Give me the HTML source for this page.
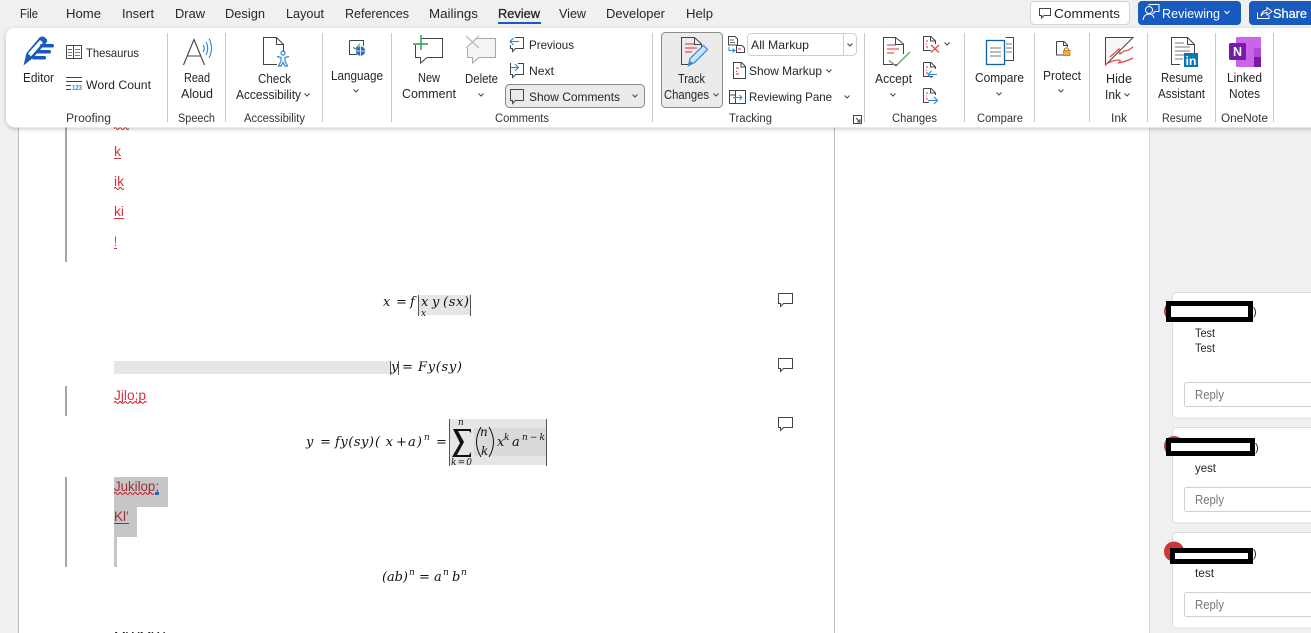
<!DOCTYPE html>
<html lang="en"><head><meta charset="utf-8"><title>Word Review</title>
<style>
html,body{margin:0;padding:0;width:1311px;height:633px;overflow:hidden;background:#f0f0f0}
svg{display:block;position:absolute;left:0;top:0}
text{font-family:"Liberation Sans",sans-serif;font-size:12.5px;fill:#262626;white-space:pre}
.g{font-size:11.5px;fill:#333}
.m{font-family:"DejaVu Serif","Liberation Serif",serif;font-style:italic;font-size:13px;fill:#111}
.n{font-family:"DejaVu Serif","Liberation Serif",serif;font-style:italic;font-size:9px;fill:#111}
.u{font-family:"DejaVu Serif","Liberation Serif",serif;font-size:13px;fill:#111}
.r{fill:#d4353d;font-size:14px}
.d{fill:#9b2f33;font-size:14px}
.w{fill:#fff;font-size:13px}
.ch{fill:none;stroke:#444;stroke-width:1}
.l{fill:none;stroke:#444;stroke-width:1}
.sep{stroke:#c9c9c9;stroke-width:1}
</style></head><body>
<svg width="1311" height="633" viewBox="0 0 1311 633" xmlns="http://www.w3.org/2000/svg">
<defs>
<filter id="sh" x="-2%" y="-10%" width="104%" height="125%"><feDropShadow dx="0" dy="1.5" stdDeviation="2" flood-color="#000" flood-opacity=".22"/></filter>
<path id="c" d="M-2.5-1.5L0 1L2.500-1.500" class="ch"/>
</defs>

<!-- canvas -->
<rect width="1311" height="633" fill="#f0f0f0"/>
<rect x="18" y="100" width="1132" height="533" fill="#fff"/>
<path d="M18.500 100V633M834.500 100V633" stroke="#bdbdbd" fill="none"/>
<path d="M1149.500 100V633" stroke="#d8d8d8" fill="none"/>

<!-- document change bars -->
<g fill="#a6a6a6"><rect x="65" y="127" width="2" height="135"/><rect x="65" y="386" width="2" height="30"/><rect x="65" y="477" width="2" height="90"/></g>

<!-- document text -->
<path d="M114 128.500q1.200-2 2.500 0t2.500 0 2.500 0 2.500 0 2.500 0 2.500 0" stroke="#d4202a" fill="none"/>
<text x="114" y="156" class="r" textLength="7" lengthAdjust="spacingAndGlyphs">k</text>
<rect x="114" y="158" width="7" height="1" fill="#d4353d"/>
<text x="114" y="186" class="r" textLength="10" lengthAdjust="spacingAndGlyphs">ik</text>
<path d="M114 188.500q1.200-2 2.500 0t2.500 0 2.500 0 2.500 0" stroke="#d4202a" fill="none"/>
<text x="114" y="216" class="r" textLength="10" lengthAdjust="spacingAndGlyphs">ki</text>
<rect x="114" y="218" width="10" height="1" fill="#d4353d"/>
<text x="114" y="246" class="r" textLength="3" lengthAdjust="spacingAndGlyphs">!</text>
<rect x="114" y="248" width="3" height="1" fill="#d4353d"/>

<text x="114" y="400" class="r" textLength="32" lengthAdjust="spacingAndGlyphs">Jjlo;p</text>
<path d="M114 402.500q1.200-2 2.500 0t2.500 0 2.500 0 2.500 0 2.500 0 2.500 0 2.500 0 2.500 0 2.500 0 2.500 0 2.500 0 2.500 0 2.500 0" stroke="#d4202a" fill="none"/>

<path d="M114 477H168V507H137V537H117V567H114Z" fill="#c6c6c6"/>
<text x="114" y="491" class="d" textLength="45" lengthAdjust="spacingAndGlyphs">Jukilop;</text>
<path d="M114 493.500q1.200-2 2.500 0t2.500 0 2.500 0 2.500 0 2.500 0 2.500 0 2.500 0 2.500 0 2.500 0 2.500 0 2.500 0 2.500 0 2.500 0 2.500 0 2.500 0 2.500 0" stroke="#c8202a" fill="none"/>
<rect x="155" y="492" width="4" height="3" fill="#2b5fb8"/>
<text x="114" y="521" class="d" textLength="15" lengthAdjust="spacingAndGlyphs">Kl’</text>
<rect x="114" y="523" width="15" height="1" fill="#9b2f33"/>
<text x="114" y="641" style="font-size:13px;fill:#222" textLength="51" lengthAdjust="spacingAndGlyphs">MWMW</text>

<!-- equation 1 -->
<rect x="419" y="295" width="51" height="20" fill="#e6e6e6"/>
<path d="M418.500 295V316M470.500 295V316" stroke="#555" fill="none"/>
<text x="383" y="306" class="m">x</text>
<text x="396" y="306" class="u">=</text>
<text x="410" y="306" class="m">f</text>
<text x="421" y="306" class="m">x</text>
<text x="421" y="316" class="n">x</text>
<text x="432" y="306" class="m">y</text>
<text x="443" y="306" class="m" textLength="26">(sx)</text>

<!-- equation 2 -->
<rect x="114" y="361" width="277" height="13" fill="#e6e6e6"/>
<path d="M390.500 361V375M398.500 361V375" stroke="#555" fill="none"/>
<text x="391" y="371" class="m">y</text>
<text x="402" y="371" class="u">=</text>
<text x="418" y="371" class="m" textLength="44">Fy(sy)</text>

<!-- equation 3 -->
<rect x="450" y="419" width="97" height="46" fill="#e6e6e6"/>
<rect x="474" y="428" width="72" height="28" fill="#dadada"/>
<path d="M449.500 419V466M546.500 419V466" stroke="#555" fill="none"/>
<text x="306" y="446" class="m">y</text>
<text x="320" y="446" class="u">=</text>
<text x="335" y="446" class="m" textLength="39">fy(sy)</text>
<text x="375" y="446" class="m" textLength="18">(x</text>
<text x="396" y="446" class="u">+</text>
<text x="408" y="446" class="m" textLength="14">a)</text>
<text x="424" y="440" class="n">n</text>
<text x="436" y="446" class="u">=</text>
<text x="458" y="425" class="n">n</text>
<path d="M453 429H471V433L469 431H458L464 442L457 455H469L471 452V457H452L460 443Z" fill="#111"/>
<text x="451" y="465" class="n" textLength="21">k=0</text>
<path d="M481 427Q472 442 481 457M489 427Q498 442 489 457" stroke="#111" fill="none"/>
<text x="480" y="436" class="m" style="font-size:12px">n</text>
<text x="481" y="455" class="m" style="font-size:12px">k</text>
<text x="497" y="446" class="m">x</text>
<text x="504" y="440" class="n">k</text>
<text x="512" y="446" class="m">a</text>
<text x="522" y="440" class="n" textLength="23">n−k</text>

<!-- equation 4 -->
<text x="382" y="581" class="m" textLength="26">(ab)</text>
<text x="409" y="575" class="n">n</text>
<text x="419" y="581" class="u">=</text>
<text x="434" y="581" class="m">a</text>
<text x="443" y="575" class="n">n</text>
<text x="452" y="581" class="m">b</text>
<text x="461" y="575" class="n">n</text>

<!-- comment margin icons -->
<path d="M778.500 293.500H792.500V303.500H783.500L780.500 306.500V303.500H778.500Z" class="l"/>
<path d="M778.500 358.500H792.500V368.500H783.500L780.500 371.500V368.500H778.500Z" class="l"/>
<path d="M778.500 417.500H792.500V427.500H783.500L780.500 430.500V427.500H778.500Z" class="l"/>

<!-- comment cards -->
<g fill="#fff" stroke="#dcdcdc">
<rect x="1172.500" y="292.500" width="160" height="125.500" rx="4"/>
<rect x="1172.500" y="427.500" width="160" height="95.500" rx="4"/>
<rect x="1172.500" y="532.500" width="160" height="95.500" rx="4"/>
<rect x="1184.500" y="382.500" width="150" height="24" rx="2" stroke="#d0d0d0"/>
<rect x="1184.500" y="487.500" width="150" height="24" rx="2" stroke="#d0d0d0"/>
<rect x="1184.500" y="592.500" width="150" height="24" rx="2" stroke="#d0d0d0"/>
</g>
<circle cx="1174" cy="311" r="10" fill="#d13438"/>
<circle cx="1174" cy="446" r="10" fill="#d13438"/>
<circle cx="1174" cy="551.500" r="10" fill="#d13438"/>
<g fill="#fff" stroke="#000">
<rect x="1168.500" y="303.500" width="82" height="16" stroke-width="5"/>
<rect x="1168.500" y="440.500" width="84" height="13" stroke-width="5"/>
<rect x="1172.500" y="550.500" width="78" height="11" stroke-width="5"/>
</g>
<g>
<text x="1253" y="315" style="font-size:11px">)</text>
<text x="1255" y="451" style="font-size:11px">)</text>
<text x="1253" y="557" style="font-size:11px">)</text>
<text x="1195" y="337" style="font-size:12px" textLength="20" lengthAdjust="spacingAndGlyphs">Test</text>
<text x="1195" y="352" style="font-size:12px" textLength="20" lengthAdjust="spacingAndGlyphs">Test</text>
<text x="1195" y="472" style="font-size:12px" textLength="21" lengthAdjust="spacingAndGlyphs">yest</text>
<text x="1195" y="577" style="font-size:12px" textLength="19" lengthAdjust="spacingAndGlyphs">test</text>
<text x="1195" y="399" style="font-size:12.500px;fill:#777" textLength="29" lengthAdjust="spacingAndGlyphs">Reply</text>
<text x="1195" y="504" style="font-size:12.500px;fill:#777" textLength="29" lengthAdjust="spacingAndGlyphs">Reply</text>
<text x="1195" y="609" style="font-size:12.500px;fill:#777" textLength="29" lengthAdjust="spacingAndGlyphs">Reply</text>
</g>

<!-- ribbon -->
<rect x="0" y="0" width="1311" height="28" fill="#f0f0f0"/>
<rect x="6" y="28" width="1330" height="99.500" rx="9" fill="#fff" filter="url(#sh)"/>

<!-- tabs -->
<g>
<text x="20" y="18" textLength="18" lengthAdjust="spacingAndGlyphs" style="font-size:13px">File</text>
<text x="66" y="18" textLength="35" lengthAdjust="spacingAndGlyphs">Home</text>
<text x="122" y="18" textLength="32" lengthAdjust="spacingAndGlyphs">Insert</text>
<text x="175" y="18" textLength="30" lengthAdjust="spacingAndGlyphs">Draw</text>
<text x="225" y="18" textLength="40" lengthAdjust="spacingAndGlyphs">Design</text>
<text x="286" y="18" textLength="38" lengthAdjust="spacingAndGlyphs">Layout</text>
<text x="345" y="18" textLength="64" lengthAdjust="spacingAndGlyphs">References</text>
<text x="429" y="18" textLength="49" lengthAdjust="spacingAndGlyphs">Mailings</text>
<text x="498" y="18" textLength="42" lengthAdjust="spacingAndGlyphs" style="stroke:#262626;stroke-width:.3">Review</text>
<rect x="498" y="22" width="43" height="2" fill="#185abd"/>
<text x="559" y="18" textLength="27" lengthAdjust="spacingAndGlyphs">View</text>
<text x="606" y="18" textLength="59" lengthAdjust="spacingAndGlyphs">Developer</text>
<text x="686" y="18" textLength="27" lengthAdjust="spacingAndGlyphs">Help</text>
</g>

<!-- top right buttons -->
<rect x="1030.500" y="1.500" width="99" height="23" rx="4" fill="#fff" stroke="#d4d4d4"/>
<path d="M1039.500 8.500H1050.500V15.500H1044L1041.500 18V15.500H1039.500Z" class="l"/>
<text x="1054" y="18" textLength="66" lengthAdjust="spacingAndGlyphs">Comments</text>
<rect x="1138" y="1" width="103" height="24" rx="4" fill="#185abd"/>
<g fill="none" stroke="#fff"><circle cx="1149" cy="10" r="3.500"/><path d="M1143 20Q1144 14 1149 14Q1153 14 1154 18M1149 5.500V4.500H1159V11.500H1155L1152.500 14"/></g>
<text x="1162" y="18" class="w" textLength="58" lengthAdjust="spacingAndGlyphs">Reviewing</text>
<path d="M1224.500 11L1227 13.500L1229.500 11" fill="none" stroke="#fff"/>
<rect x="1249" y="1" width="70" height="24" rx="4" fill="#185abd"/>
<path d="M1257.500 12.500V18.500H1269V15M1261 16Q1262 10.500 1267 10V7.500L1272 11.500L1267 15V12.500Q1263 12.500 1261 16Z" fill="none" stroke="#fff"/>
<text x="1273" y="18" class="w" textLength="34" lengthAdjust="spacingAndGlyphs" style="stroke:#fff;stroke-width:.2">Share</text>

<!-- separators -->
<path class="sep" d="M167.500 33V122M225.500 33V122M322.500 33V122M391.500 33V122M652.500 33V122M864.500 33V122M964.500 33V122M1034.500 33V122M1089.500 33V122M1147.500 33V122M1215.500 33V122M1273.500 33V122"/>

<!-- group labels -->
<g>
<text x="66" y="122" class="g" textLength="45" lengthAdjust="spacingAndGlyphs">Proofing</text>
<text x="178" y="122" class="g" textLength="37" lengthAdjust="spacingAndGlyphs">Speech</text>
<text x="244" y="122" class="g" textLength="61" lengthAdjust="spacingAndGlyphs">Accessibility</text>
<text x="495" y="122" class="g" textLength="54" lengthAdjust="spacingAndGlyphs">Comments</text>
<text x="729" y="122" class="g" textLength="43" lengthAdjust="spacingAndGlyphs">Tracking</text>
<text x="892" y="122" class="g" textLength="45" lengthAdjust="spacingAndGlyphs">Changes</text>
<text x="977" y="122" class="g" textLength="46" lengthAdjust="spacingAndGlyphs">Compare</text>
<text x="1111" y="122" class="g" textLength="16" lengthAdjust="spacingAndGlyphs">Ink</text>
<text x="1162" y="122" class="g" textLength="40" lengthAdjust="spacingAndGlyphs">Resume</text>
<text x="1221" y="122" class="g" textLength="47" lengthAdjust="spacingAndGlyphs">OneNote</text>
</g>

<!-- buttons with state -->
<rect x="661.500" y="32.500" width="61" height="75" rx="4" fill="#ebebeb" stroke="#8a8a8a"/>
<rect x="505.500" y="84.500" width="139" height="23" rx="4" fill="#ebebeb" stroke="#8a8a8a"/>
<rect x="747.500" y="33.500" width="109" height="22" rx="4" fill="#fff" stroke="#cfcfcf"/>
<path d="M843.500 34V55" stroke="#cfcfcf"/>

<!-- ribbon text -->
<g>
<text x="23" y="82" textLength="31" lengthAdjust="spacingAndGlyphs">Editor</text>
<text x="86" y="57" textLength="53" lengthAdjust="spacingAndGlyphs" style="font-size:12px">Thesaurus</text>
<text x="86" y="89" textLength="65" lengthAdjust="spacingAndGlyphs" style="font-size:12px">Word Count</text>
<text x="184" y="82" textLength="26" lengthAdjust="spacingAndGlyphs">Read</text>
<text x="181" y="98" textLength="32" lengthAdjust="spacingAndGlyphs">Aloud</text>
<text x="258" y="83" textLength="33" lengthAdjust="spacingAndGlyphs">Check</text>
<text x="236" y="99" textLength="65" lengthAdjust="spacingAndGlyphs">Accessibility</text>
<text x="331" y="80" textLength="52" lengthAdjust="spacingAndGlyphs">Language</text>
<text x="418" y="82" textLength="22" lengthAdjust="spacingAndGlyphs">New</text>
<text x="402" y="98" textLength="54" lengthAdjust="spacingAndGlyphs">Comment</text>
<text x="465" y="83" textLength="33" lengthAdjust="spacingAndGlyphs">Delete</text>
<text x="529" y="49" textLength="45" lengthAdjust="spacingAndGlyphs" style="font-size:12px">Previous</text>
<text x="529" y="75" textLength="25" lengthAdjust="spacingAndGlyphs" style="font-size:12px">Next</text>
<text x="529" y="101" textLength="91" lengthAdjust="spacingAndGlyphs" style="font-size:12px">Show Comments</text>
<text x="678" y="83" textLength="27" lengthAdjust="spacingAndGlyphs">Track</text>
<text x="664" y="99" textLength="45" lengthAdjust="spacingAndGlyphs">Changes</text>
<text x="751" y="49" textLength="58" lengthAdjust="spacingAndGlyphs" style="font-size:12px">All Markup</text>
<text x="749" y="75" textLength="73" lengthAdjust="spacingAndGlyphs" style="font-size:12px">Show Markup</text>
<text x="749" y="101" textLength="83" lengthAdjust="spacingAndGlyphs" style="font-size:12px">Reviewing Pane</text>
<text x="875" y="83" textLength="37" lengthAdjust="spacingAndGlyphs">Accept</text>
<text x="975" y="82" textLength="49" lengthAdjust="spacingAndGlyphs">Compare</text>
<text x="1043" y="80" textLength="38" lengthAdjust="spacingAndGlyphs">Protect</text>
<text x="1106" y="83" textLength="26" lengthAdjust="spacingAndGlyphs">Hide</text>
<text x="1105" y="99" textLength="16" lengthAdjust="spacingAndGlyphs">Ink</text>
<text x="1161" y="82" textLength="42" lengthAdjust="spacingAndGlyphs">Resume</text>
<text x="1158" y="98" textLength="47" lengthAdjust="spacingAndGlyphs">Assistant</text>
<text x="1227" y="82" textLength="35" lengthAdjust="spacingAndGlyphs">Linked</text>
<text x="1229" y="98" textLength="31" lengthAdjust="spacingAndGlyphs">Notes</text>
</g>

<!-- chevrons -->
<g>
<use href="#c" x="307" y="95"/><use href="#c" x="356" y="91"/><use href="#c" x="481" y="95"/>
<use href="#c" x="635" y="96"/><use href="#c" x="716" y="95"/><use href="#c" x="850" y="45"/>
<use href="#c" x="829" y="71"/><use href="#c" x="847" y="97"/><use href="#c" x="893" y="95"/>
<use href="#c" x="947" y="44"/><use href="#c" x="999" y="94"/><use href="#c" x="1061" y="91"/>
<use href="#c" x="1127" y="95"/>
</g>

<!-- Editor -->
<g fill="#185abd">
<path d="M23.500 65.500L26.500 53L39.500 37.500Q42 35.500 45 37.500L47 39.500Q47.500 41 46.500 42.500L33 58Z M28 53.500L31 56.500L43 42.500L40 40Z" fill-rule="evenodd"/>
<rect x="40" y="44" width="14" height="3.500" rx="1.700"/>
<rect x="36" y="50" width="15" height="3.500" rx="1.700"/>
<rect x="32" y="56" width="14" height="3.500" rx="1.700"/>
</g>
<!-- Thesaurus -->
<path class="l" d="M66.500 45.500H73.500V58.500H66.500ZM73.500 45.500H81.500V58.500H73.500Z"/>
<path d="M68 49.500H72" stroke="#e02b2b"/><path d="M68 52.500H72M68 55.500H72M75 49.500H80M75 52.500H80M75 55.500H80" stroke="#777"/>
<!-- Word count -->
<path class="l" d="M66 77.500H82M66 81.500H82M66 85.500H71M66 89.500H71"/>
<text x="72" y="90" style="font-size:7.500px;fill:#2b88d8;font-weight:bold" textLength="10" lengthAdjust="spacingAndGlyphs">123</text>
<!-- Read aloud -->
<path d="M183.500 65L194 39.500L204.500 65M187 56H201" fill="none" stroke="#444" stroke-width="1.100"/>
<path d="M203 45Q205.500 48.500 203 52M206 42Q209.500 48 206 55M209 38.500Q214 48 209 58" fill="none" stroke="#2b88d8" stroke-width="1.100"/>
<!-- Check accessibility -->
<path class="l" d="M283.500 52V44.500L276.500 37.500H263.500V64.500H277M276.500 37.500V44.500H283.500"/>
<g fill="none" stroke="#2b88d8" stroke-width="1.200"><circle cx="283" cy="53" r="2"/><path d="M277 56.500L281 57.500V61L278.500 66H281L283 62.500L285 66H287.500L285 61V57.500L289 56.500"/></g>
<!-- Language -->
<path class="l" d="M349.500 40.500H363.500V46M349.500 40.500V54.500H357"/>
<path d="M353 47L355 49L360 44" stroke="#2e9e5b" fill="none"/>
<circle cx="360.500" cy="51" r="4.700" fill="#2b6cc4"/><path d="M356 51H365M360.500 46.500V55.500" stroke="#fff" stroke-width=".8"/>
<!-- New comment -->
<path class="l" d="M421.500 38.500H442.500V57.500H427L420.500 63V57.500H415.500V45"/>
<path d="M421 35V50M413 44H428" stroke="#1f9e4d" stroke-width="1.400"/>
<!-- Delete -->
<path d="M475 38.500H495.500V57.500H479L472.500 63V57.500H467.500V48" fill="#f4f4f4" stroke="#a8a8a8"/>
<path d="M466 36L479 48M479 36L466 48" stroke="#bdbdbd" stroke-width="1.300"/>
<!-- Previous -->
<path class="l" d="M515 37.500H523.500V48.500H515.500L512.500 51.500V48.500H510.500V45"/>
<path d="M519 41.500H510.500M513.500 38L510 41.500L513.500 45" fill="none" stroke="#2b88d8" stroke-width="1.100"/>
<!-- Next -->
<path class="l" d="M518 63.500H523.500V74.500H515.500L512.500 77.500V74.500H510.500V63.500H511"/>
<path d="M510 67.500H518.500M515 64L518.500 67.500L515 71" fill="none" stroke="#2b88d8" stroke-width="1.100"/>
<!-- Show comments bubble -->
<path class="l" d="M510.500 89.500H523.500V100.500H515.500L512.500 103.500V100.500H510.500Z"/>
<!-- Track changes -->
<path class="l" d="M701.500 48V44L694.500 37.500H681.500V64.500H688M694.500 37.500V44.500H701.500"/>
<path d="M685 44H694M685 48H697M685 52H692" stroke="#e8282d"/>
<path d="M688.500 65.500L690 58.500L703.500 45.500L707.500 49.500L694.500 62.500Z" fill="#cfe4f6" stroke="#2b88d8" stroke-width="1.200"/>
<path d="M689 65L690.500 61L692.500 63Z" fill="#2b88d8"/>
<!-- display for review -->
<path class="l" d="M728.500 36.500H735L737.500 39V45H728.500ZM736.500 45.500H742L744.500 48V52.500H736.500Z"/>
<path d="M730 40H734M730 42.500H735" stroke="#666"/>
<path d="M738 49H741" stroke="#e02b2b"/>
<path d="M729 47V50.500H734M732.500 48.500L735 50.500L732.500 52.500" fill="none" stroke="#2b88d8"/>
<!-- show markup -->
<path class="l" d="M733.500 62.500H741.500L745.500 66.500V78.500H733.500ZM741 62.500V67H745.500"/>
<path d="M736 68H739M736 71.500H737M736 74H739" stroke="#e02b2b"/>
<!-- reviewing pane -->
<path class="l" d="M729.500 90.500H745.500V103.500H729.500ZM729.500 90.500V95H735.500V103.500M735.500 90.500V95"/>
<path d="M733 97.500H742M739.500 95L742 97.500L739.500 100" fill="none" stroke="#2b88d8"/>
<!-- Accept -->
<path class="l" d="M903.500 54V44L895.500 37.500H883.500V64.500H897M895.500 37.500V44.500H903.500"/>
<path d="M887 45H896M887 49H899M887 53H894" stroke="#e8282d"/>
<path d="M889 60.500L896 66L910 52" fill="none" stroke="#57a869" stroke-width="1.300"/>
<!-- reject -->
<path class="l" d="M931 50.500H923.500V36.500H931L935.500 41V44M930.500 36.500V41H935.500"/>
<path d="M926 41H928M926 44H927M926 47H928" stroke="#e8282d"/>
<path d="M931 45L939 52.500M939 45L931 52.500" stroke="#e8474b" stroke-width="1.300"/>
<!-- previous change -->
<path class="l" d="M923.500 62.500V76.500H933M935.500 69V67L931 62.500H923.500M930.500 62.500V67H935.500"/>
<path d="M926 67H928M926 70H927M926 73H928" stroke="#e8282d"/>
<path d="M937 74.500H928.500M931.500 71L928 74.500L931.500 78" fill="none" stroke="#2b88d8" stroke-width="1.100"/>
<!-- next change -->
<path class="l" d="M923.500 88.500V102.500H929M935.500 95V93L931 88.500H923.500M930.500 88.500V93H935.500"/>
<path d="M926 93H928M926 96H927M926 99H928" stroke="#e8282d"/>
<path d="M928 100.500H937.500M934 97L937.500 100.500L934 104" fill="none" stroke="#2b88d8" stroke-width="1.100"/>
<!-- Compare -->
<path class="l" d="M1005.500 37.500H1013.500V60.500H1005"/>
<path d="M1006 44H1012M1006 48H1012M1006 52H1012" stroke="#777"/>
<rect x="986.500" y="40.500" width="18" height="24" fill="#fff" stroke="#0f62a8" stroke-width="1.300"/>
<path d="M990 48H1001M990 52H1001M990 56H1001" stroke="#777"/>
<!-- Protect -->
<path class="l" d="M1056.500 41.500H1064L1067.500 45V47M1056.500 41.500V55H1063M1063.500 41.500V45.500H1067.500"/>
<path d="M1064.500 51V49Q1066.500 46.500 1068.500 49V51" fill="none" stroke="#a56a16"/>
<rect x="1063.500" y="50.500" width="6.500" height="5" fill="#f0ad3a" stroke="#b97a14" stroke-width=".8"/>
<!-- Hide ink -->
<path d="M1105.500 37.500H1133L1105.500 65Z" fill="#f7f7f7" stroke="#444"/>
<path d="M1110 57L1119 49L1120 54L1124 51Q1128 51 1133 47M1105 65Q1112 60 1119 60Q1122 61 1118 63Q1125 62 1133 58" fill="none" stroke="#ec4a50" stroke-width="1.300"/>
<!-- Resume assistant -->
<path class="l" d="M1180 64.500H1171.500V37.500H1187.500L1194.500 44.500V54M1187.500 37.500V44.500H1194.500"/>
<path d="M1175 43H1184M1175 47H1190M1175 51H1190M1175 55H1186M1175 59H1183" stroke="#777"/>
<rect x="1184" y="53" width="14" height="14" fill="#0a76b4"/>
<text x="1185.500" y="65" style="font-size:12px;font-weight:bold;fill:#fff" textLength="11" lengthAdjust="spacingAndGlyphs">in</text>
<!-- OneNote -->
<rect x="1236" y="37" width="25" height="30" rx="1.500" fill="#ca64ea"/>
<rect x="1254" y="37" width="7" height="11" fill="#ca64ea"/>
<rect x="1254" y="48" width="7" height="9" fill="#ae4bd5"/>
<rect x="1254" y="57" width="7" height="10" fill="#7719aa"/>
<rect x="1229" y="43" width="17" height="17" rx="1.500" fill="#7719aa"/>
<text x="1233" y="56" style="font-size:13px;font-weight:bold;fill:#fff" textLength="9" lengthAdjust="spacingAndGlyphs">N</text>
<!-- Tracking launcher -->
<path d="M853.500 115.500H861.500V123.500H853.500ZM856 118L860 122M860 119V122H857" class="l"/>
</svg>
</body></html>
